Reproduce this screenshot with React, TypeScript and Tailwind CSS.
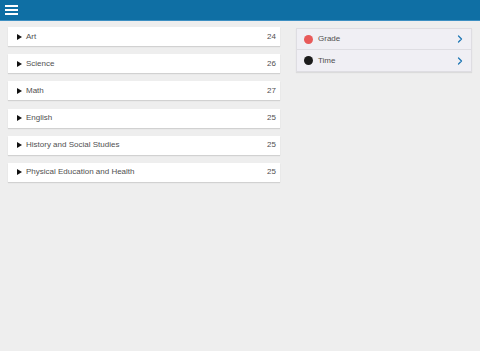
import { ChevronRight } from "lucide-react";

const SUBJECTS = [
  { name: "Art", count: 24 },
  { name: "Science", count: 26 },
  { name: "Math", count: 27 },
  { name: "English", count: 25 },
  { name: "History and Social Studies", count: 25 },
  { name: "Physical Education and Health", count: 25 },
];

const SORTS = [
  { label: "Grade", dot: "bg-[#e85a5a]" },
  { label: "Time", dot: "bg-[#1c1c1c]" },
];

export default function App() {
  return (
    <div
      className="min-h-[351px] bg-[#eeeeee] text-[#505050]"
      style={{ fontFamily: '"Liberation Sans", Arial, sans-serif' }}
    >
      <header className="h-[21px] bg-[#0f6fa4] border-b border-[#3d8fc2] flex items-center pl-[5px]">
        <div className="flex flex-col gap-[2px]">
          <span className="block w-[13px] h-[2px] bg-white" />
          <span className="block w-[13px] h-[2px] bg-white" />
          <span className="block w-[13px] h-[2px] bg-white" />
        </div>
      </header>

      <div className="flex gap-4 pl-2 pr-[8px] pt-[6px]">
        {/* Subjects list */}
        <div className="w-[272px] flex flex-col gap-[8.2px]">
          {SUBJECTS.map((s) => (
            <div
              key={s.name}
              className="h-[19px] bg-white flex items-center pl-[9px] pr-[4px] shadow-[0_1px_1px_rgba(0,0,0,0.12)] text-[8px]"
            >
              <span className="w-0 h-0 border-y-[3.5px] border-y-transparent border-l-[5px] border-l-[#111] mr-[4px]" />
              <span className="flex-1">{s.name}</span>
              <span>{s.count}</span>
            </div>
          ))}
        </div>

        {/* Sort panel */}
        <div className="w-[176px] mt-[1px] self-start bg-[#f0eff4] border border-[#dedde2] shadow-[0_1px_1px_rgba(0,0,0,0.08)]">
          {SORTS.map((o, i) => (
            <div
              key={o.label}
              className={`h-[21px] flex items-center pl-[7px] pr-[5px] text-[8px] ${
                i === 0 ? "border-b border-[#dedde2]" : ""
              }`}
            >
              <span className={`w-[9px] h-[9px] rounded-full ${o.dot} mr-[5px]`} />
              <span className="flex-1">{o.label}</span>
              <ChevronRight className="w-[12px] h-[12px] text-[#1f77b4]" strokeWidth={2.5} />
            </div>
          ))}
        </div>
      </div>
    </div>
  );
}
